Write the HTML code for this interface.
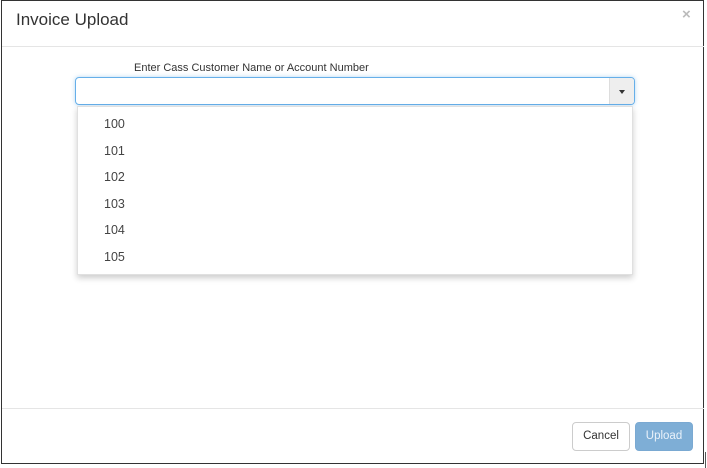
<!DOCTYPE html>
<html><head><style>
body{margin:0;width:707px;height:468px;background:#fff;font-family:"Liberation Sans",Arial,sans-serif;position:relative;overflow:hidden}
.frame{position:absolute;left:1px;top:0;width:703px;height:464px;border:1px solid #333;box-sizing:border-box}
.title{position:absolute;left:16px;top:10px;font-size:17px;color:#333}
.x{position:absolute;left:682px;top:6px;font-size:15px;color:#bbb;font-weight:bold}
.hl{position:absolute;left:2px;right:3px;top:46px;border-top:1px solid #e5e5e5}
.fl{position:absolute;left:2px;right:3px;top:408px;border-top:1px solid #e5e5e5}
.label{position:absolute;left:134px;top:62px;font-size:11px;color:#333}
.input{position:absolute;left:75px;top:77px;width:560px;height:28px;border:1px solid #66afe9;border-radius:4px;box-sizing:border-box;box-shadow:0 0 4px rgba(102,175,233,.5);overflow:hidden}
.caret{position:absolute;right:0;top:0;width:24px;height:26px;background:#eee;border-left:1px solid #ddd}
.caret:after{content:"";position:absolute;left:9px;top:12px;border-left:3px solid transparent;border-right:3px solid transparent;border-top:4px solid #333}
.dd{position:absolute;left:77px;top:106px;width:556px;height:169px;background:#fff;border:1px solid #e0e0e0;box-shadow:0 3px 6px rgba(0,0,0,.2);box-sizing:border-box}
.dd div{position:absolute;left:26px;font-size:12.5px;color:#444}
.btn{position:absolute;top:422px;height:29px;border-radius:4px;box-sizing:border-box;font-size:11.5px;text-align:center;line-height:27px}
.cancel{left:572px;width:58px;border:1px solid #ccc;color:#333;background:#fff}
.up{left:635px;width:58px;background:#7eaed6;border:1px solid #7aa9d2;color:#eaf2fa}
.vl{position:absolute;left:705px;top:452px;height:16px;border-left:1px solid #555}
</style></head><body>
<div class="frame"></div>
<div class="title">Invoice Upload</div>
<div class="x">×</div>
<div class="hl"></div>
<div class="label">Enter Cass Customer Name or Account Number</div>
<div class="input"><div class="caret"></div></div>
<div class="dd">
<div style="top:10px">100</div>
<div style="top:37px">101</div>
<div style="top:63px">102</div>
<div style="top:90px">103</div>
<div style="top:116px">104</div>
<div style="top:143px">105</div>
</div>
<div class="fl"></div>
<div class="btn cancel">Cancel</div>
<div class="btn up">Upload</div>
<div class="vl"></div>
</body></html>
